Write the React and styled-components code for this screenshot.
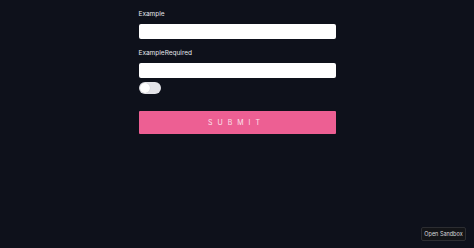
import React, { useState } from "react";
import styled, { createGlobalStyle } from "styled-components";

const Global = createGlobalStyle`
  html, body { margin: 0; padding: 0; background: #0e111b; }
  body { font-family: Inter, "Noto Sans", sans-serif; }
`;

const Page = styled.div`
  width: 474px;
  height: 248px;
  background: #0e111b;
  display: flex;
  justify-content: center;
  position: relative;
  overflow: hidden;
`;

const Form = styled.form`
  width: 197px;
  padding-top: 10px;
  display: flex;
  flex-direction: column;
`;

const Label = styled.label`
  color: #e4e6ec;
  font-size: 6.5px;
  line-height: 8px;
  margin-bottom: 6px;
`;

const Input = styled.input`
  box-sizing: border-box;
  width: 100%;
  height: 15px;
  border: none;
  border-radius: 2px;
  background: #ffffff;
  margin-bottom: ${(p) => p.$gap}px;
  outline: none;
`;

const Toggle = styled.button`
  width: 22px;
  height: 12px;
  padding: 1px;
  border: none;
  border-radius: 6px;
  background: #e3e3e8;
  display: flex;
  align-items: center;
  justify-content: ${(p) => (p.$on ? "flex-end" : "flex-start")};
  cursor: pointer;
  margin-bottom: 17px;
`;

const Knob = styled.span`
  width: 10px;
  height: 10px;
  border-radius: 50%;
  background: #ffffff;
  box-shadow: 0 0 1px rgba(0, 0, 0, 0.2);
`;

const Submit = styled.button`
  height: 23px;
  width: 100%;
  border: none;
  border-radius: 1px;
  background: #ed5f93;
  color: #fbe3ec;
  font-family: Inter, "Noto Sans", sans-serif;
  font-size: 7px;
  letter-spacing: 5px;
  padding-left: 5px;
`;

const SandboxButton = styled.button`
  position: absolute;
  right: 8px;
  bottom: 7px;
  width: 45px;
  height: 14px;
  padding: 0;
  background: #131417;
  border: 1px solid #2c2d31;
  border-radius: 2px;
  color: #d8d8dc;
  font-family: Inter, "Noto Sans", sans-serif;
  font-size: 5.5px;
  white-space: nowrap;
`;

export default function App() {
  const [on, setOn] = useState(false);
  return (
    <Page>
      <Global />
      <Form onSubmit={(e) => e.preventDefault()}>
        <Label>Example</Label>
        <Input $gap={10} />
        <Label>ExampleRequired</Label>
        <Input $gap={4} />
        <Toggle type="button" $on={on} onClick={() => setOn(!on)}>
          <Knob />
        </Toggle>
        <Submit type="submit">SUBMIT</Submit>
      </Form>
      <SandboxButton>Open Sandbox</SandboxButton>
    </Page>
  );
}
